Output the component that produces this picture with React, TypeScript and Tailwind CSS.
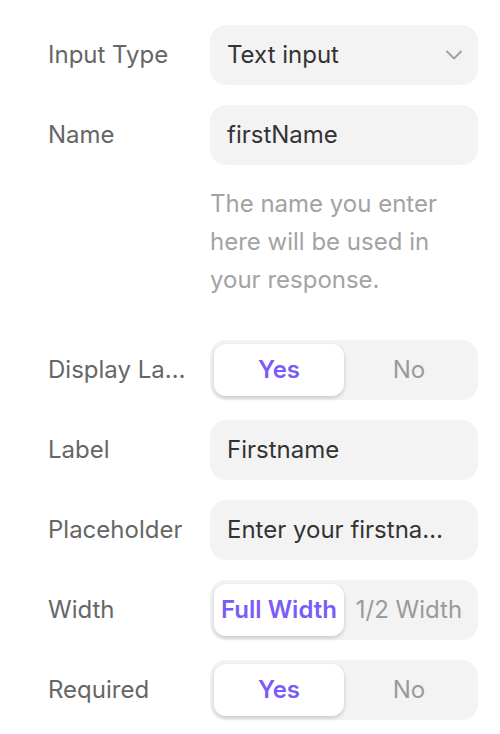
import { ChevronDown } from "lucide-react";

const font = { fontFamily: "Inter, 'Noto Sans', sans-serif" };

const Row = ({ label, children }: { label: string; children: React.ReactNode }) => (
    <div className="flex items-start">
        <div className="w-[162px] h-[60px] flex items-center text-[24px] text-[#666666] pr-[24px]">
            <span className="truncate">{label}</span>
        </div>
        <div className="w-[268px]">{children}</div>
    </div>
);

const Field = ({ value, select }: { value: string; select?: boolean }) => (
    <div className="h-[60px] rounded-2xl bg-[#f3f3f3] flex items-center pl-[17px] pr-[10px] text-[24px] text-[#333333]">
        <span className="truncate flex-1 pr-[24px]">{value}</span>
        {select && <ChevronDown size={28} strokeWidth={1.7} className="text-[#a0a0a0] shrink-0" />}
    </div>
);

const Toggle = ({ options, selected }: { options: string[]; selected: number }) => (
    <div className="h-[60px] rounded-2xl bg-[#f3f3f3] p-1 grid grid-cols-2">
        {options.map((o, i) => (
            <div
                key={o}
                className={
                    i == selected
                        ? "rounded-xl bg-white shadow-[0_2px_4px_rgba(0,0,0,0.18)] flex items-center justify-center text-[24px] font-semibold text-[#7c5cf6] whitespace-nowrap"
                        : "flex items-center justify-center text-[24px] text-[#9a9a9a] whitespace-nowrap"
                }
            >
                {o}
            </div>
        ))}
    </div>
);

export default function App() {
    return (
        <div className="w-[500px] h-[734px] bg-white pt-[25px] pl-[48px]" style={font}>
            <div className="flex flex-col gap-5">
                <Row label="Input Type"><Field value="Text input" select /></Row>
                <div>
                    <Row label="Name"><Field value="firstName" /></Row>
                    <p className="ml-[162px] w-[268px] mt-[20px] text-[24px] leading-[38px] text-[#a3a3a3]">
                        The name you enter here will be used in your response.
                    </p>
                </div>
                <div className="mt-[21px]">
                    <Row label="Display Label"><Toggle options={["Yes", "No"]} selected={0} /></Row>
                </div>
                <Row label="Label"><Field value="Firstname" /></Row>
                <Row label="Placeholder"><Field value="Enter your firstname" /></Row>
                <Row label="Width"><Toggle options={["Full Width", "1/2 Width"]} selected={0} /></Row>
                <Row label="Required"><Toggle options={["Yes", "No"]} selected={0} /></Row>
            </div>
        </div>
    );
}
